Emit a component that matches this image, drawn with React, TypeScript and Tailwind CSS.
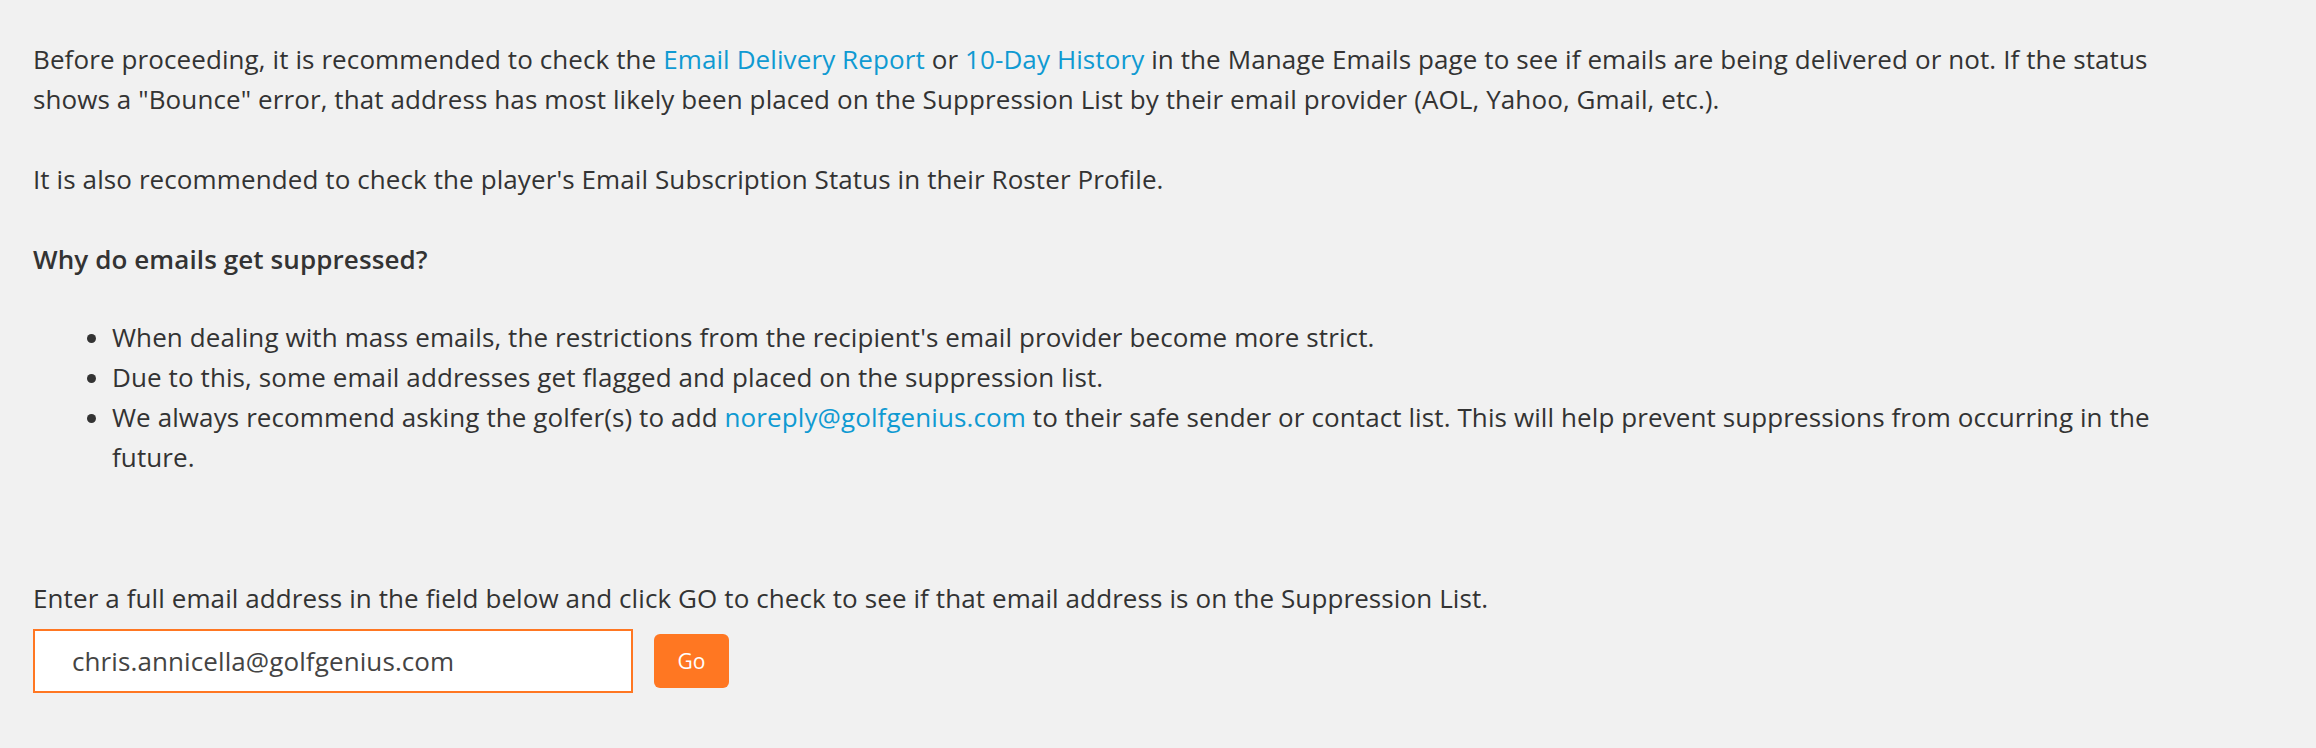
import { useState } from 'react'

export default function App() {
  const [email, setEmail] = useState('chris.annicella@golfgenius.com')

  return (
    <div className="min-h-screen bg-[#f1f1f1] px-[33px] pt-[39px] pb-10 font-['Open_Sans','Liberation_Sans',sans-serif] text-[26px] leading-[40px] tracking-[0.1px] text-[#333333]">
      <div className="max-w-[2175px]">
        <p className="mb-[40px]">
          Before proceeding, it is recommended to check the{' '}
          <a href="#" className="text-[#0f9ad2]">Email Delivery Report</a> or{' '}
          <a href="#" className="text-[#0f9ad2]">10-Day History</a> in the Manage Emails page to see if
          emails are being delivered or not. If the status shows a "Bounce" error, that address has most
          likely been placed on the Suppression List by their email provider (AOL, Yahoo, Gmail, etc.).
        </p>

        <p className="mb-[40px]">
          It is also recommended to check the player's Email Subscription Status in their Roster Profile.
        </p>

        <p className="mb-[38px] font-semibold">Why do emails get suppressed?</p>

        <ul className="list-disc pl-[79px]">
          <li>When dealing with mass emails, the restrictions from the recipient's email provider become more strict.</li>
          <li>Due to this, some email addresses get flagged and placed on the suppression list.</li>
          <li>
            We always recommend asking the golfer(s) to add{' '}
            <a href="#" className="text-[#0f9ad2]">noreply@golfgenius.com</a> to their safe sender or contact
            list. This will help prevent suppressions from occurring in the future.
          </li>
        </ul>

        <p className="mt-[101px] mb-[11px]">
          Enter a full email address in the field below and click GO to check to see if that email address is on
          the Suppression List.
        </p>

        <div className="flex items-center gap-[21px]">
          <input
            type="text"
            value={email}
            onChange={(e) => setEmail(e.target.value)}
            className="h-[64px] w-[600px] border-2 border-[#ff7722] bg-white pl-[37px] text-[26px] text-[#444444] outline-none"
          />
          <button
            type="button"
            className="h-[54px] w-[75px] rounded-[6px] bg-[#ff7722] text-[21px] text-white"
          >
            Go
          </button>
        </div>
      </div>
    </div>
  )
}
